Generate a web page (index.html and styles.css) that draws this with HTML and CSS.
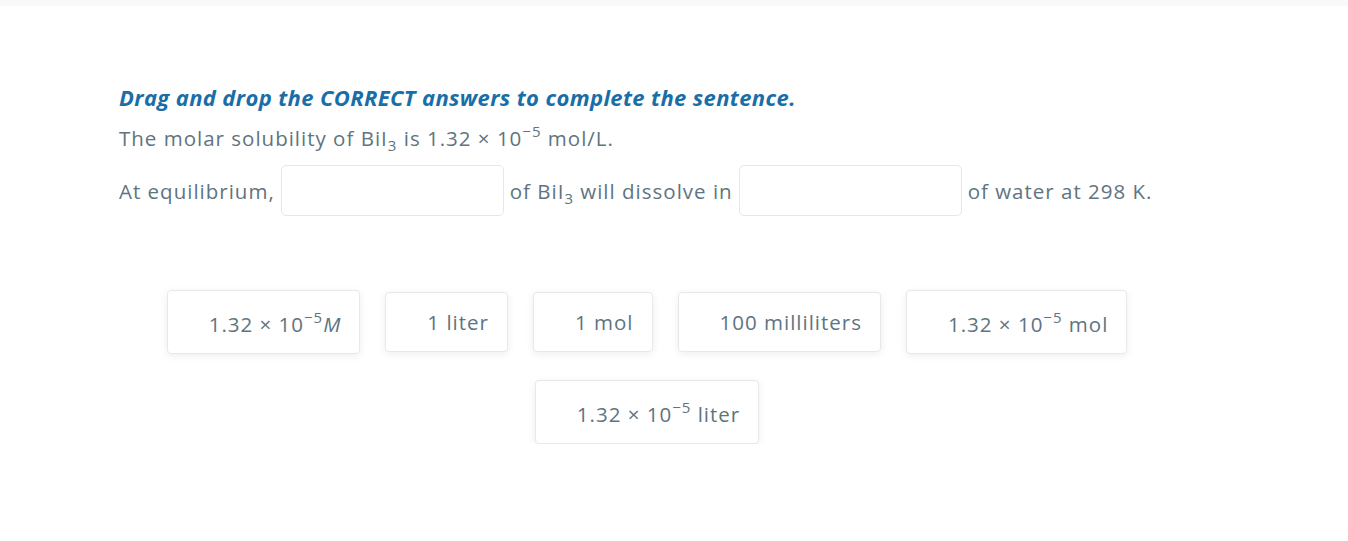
FILE: index.html
```html
<!DOCTYPE html>
<html>
<head>
<meta charset="utf-8">
<link rel="stylesheet" href="styles.css">
</head>
<body>
<div class="topband"></div>
<main class="question">
  <h1 class="prompt">Drag and drop the CORRECT answers to complete the sentence.</h1>
  <p class="line">The molar solubility of BiI<sub>3</sub> is 1.32 × 10<sup>−5</sup> mol/L.</p>
  <div class="sentence">
    <span>At equilibrium,</span>
    <span class="drop"></span>
    <span>of BiI<sub>3</sub> will dissolve in</span>
    <span class="drop"></span>
    <span>of water at 298 K.</span>
  </div>
  <div class="bank">
    <div class="chip tall"><span>1.32 × 10<sup>−5</sup><i>M</i></span></div>
    <div class="chip"><span>1 liter</span></div>
    <div class="chip"><span>1 mol</span></div>
    <div class="chip"><span>100 milliliters</span></div>
    <div class="chip tall"><span>1.32 × 10<sup>−5</sup> mol</span></div>
    <div class="chip tall"><span>1.32 × 10<sup>−5</sup> liter</span></div>
  </div>
</main>
</body>
</html>
```
FILE: styles.css
```css
html, body {
  margin: 0;
  padding: 0;
  background: #ffffff;
}
body {
  font-family: "Open Sans", "Noto Sans", sans-serif;
  color: #5e7480;
}
.topband {
  height: 6px;
  background: #f8fafa;
}
.question {
  width: 1056px;
  padding: 0 0 0 119px;
}
.prompt {
  margin: 76px 0 0 0;
  font-size: 22px;
  font-weight: 700;
  font-style: italic;
  color: #1a6ea8;
  line-height: 30px;
  letter-spacing: 0.37px;
}
.line {
  margin: 11px 0 0 0;
  font-size: 20.5px;
  line-height: 30px;
  letter-spacing: 1px;
}
sub {
  font-size: 15px;
  vertical-align: -5px;
  line-height: 0;
}
sup {
  font-size: 15px;
  vertical-align: 9px;
  line-height: 0;
}
.sentence {
  margin-top: 12px;
  display: flex;
  align-items: center;
  font-size: 20.5px;
  line-height: 30px;
  letter-spacing: 1px;
  gap: 6px;
}
.drop {
  width: 221px;
  height: 49px;
  border: 1px solid #e4e8ea;
  border-radius: 5px;
  background: #fff;
}
.bank {
  margin-top: 74px;
  width: 1056px;
  display: flex;
  flex-wrap: wrap;
  justify-content: center;
  align-items: center;
  column-gap: 25px;
  row-gap: 26px;
}
.chip {
  height: 60px;
  box-sizing: border-box;
  padding: 0 18px 0 41px;
  display: flex;
  align-items: center;
  font-size: 20.5px;
  letter-spacing: 1px;
  border: 1px solid #e6e9eb;
  border-radius: 4px;
  background: #fff;
  box-shadow: 0 2px 8px rgba(0,0,0,0.07);
}
.chip.tall {
  height: 64px;
}
.chip span {
  display: block;
  line-height: 30px;
}
.chip.tall span {
  padding-top: 4px;
}
.chip i {
  font-style: italic;
}
```
